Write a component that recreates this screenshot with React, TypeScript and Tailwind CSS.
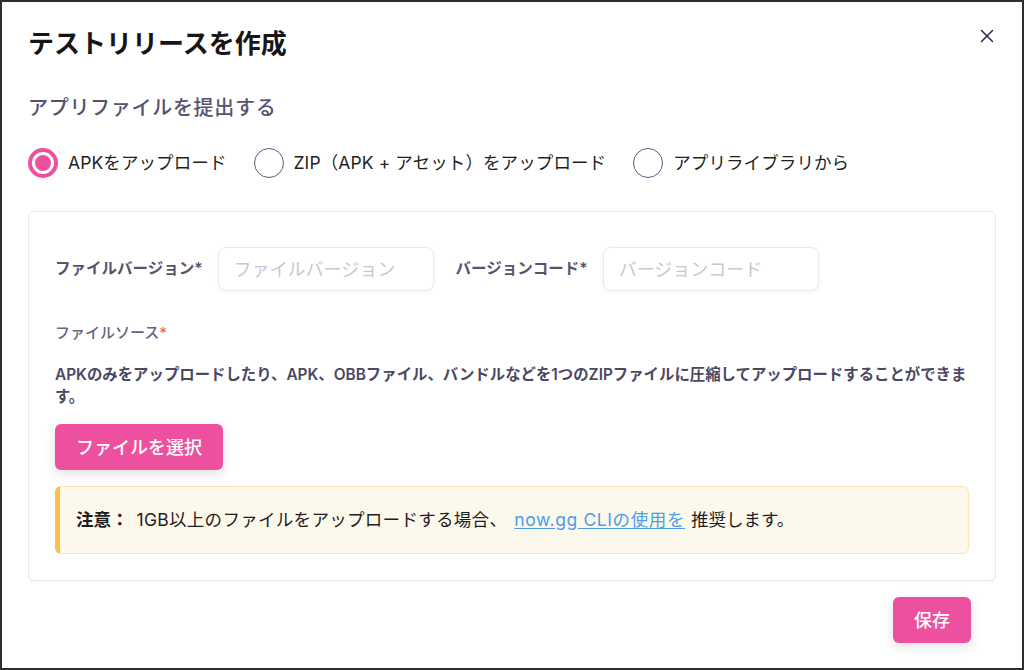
import { X } from 'lucide-react'

const font = { fontFamily: '"Inter", "Noto Sans CJK JP", sans-serif' }

const options = [
  { label: 'APKをアップロード', checked: true },
  { label: 'ZIP（APK + アセット）をアップロード', checked: false },
  { label: 'アプリライブラリから', checked: false }
]

function Radio({ checked }: { checked: boolean }) {
  if (checked) {
    return (
      <span className="flex h-[30px] w-[30px] shrink-0 items-center justify-center rounded-full bg-[#ec509f]">
        <span className="h-[22px] w-[22px] rounded-full border-[3px] border-white bg-[#ec509f]" />
      </span>
    )
  }
  return <span className="h-[30px] w-[30px] shrink-0 rounded-full border-[1.5px] border-[#5d5a80]" />
}

function Field({ label, placeholder }: { label: string; placeholder: string }) {
  return (
    <div className="flex items-center gap-[15px]">
      <span className="text-[15.5px] font-semibold text-[#57536f]">{label}*</span>
      <input
        placeholder={placeholder}
        className="h-[44px] w-[216px] rounded-lg border border-[#e9e9ef] bg-white px-[15px] text-[18px] text-[#333] shadow-[0_1px_4px_rgba(0,0,0,0.05)] outline-none placeholder:text-[#c9c7d4]"
      />
    </div>
  )
}

export default function App() {
  return (
    <div style={font} className="box-border h-[670px] w-[1024px] border-2 border-[#2e2e2e] bg-white px-[26px] pt-[26px]">
      {/* en-tête */}
      <div className="flex items-start justify-between">
        <h1 className="text-[26px] font-semibold leading-[32px] text-[#161616]">テストリリースを作成</h1>
        <button className="-mt-[3px] -mr-[2px] text-[#2a2845]">
          <X size={22} strokeWidth={1.6} />
        </button>
      </div>

      <h2 className="mt-[34px] text-[20px] font-medium leading-[28px] tracking-[0.7px] text-[#57536f]">
        アプリファイルを提出する
      </h2>

      {/* choix du type */}
      <div className="mt-[26px] flex items-center gap-[27px]">
        {options.map((opt, i) => (
          <label key={i} className="flex items-center gap-[10px]">
            <Radio checked={opt.checked} />
            <span className="text-[17.5px] leading-[24px] tracking-[0.1px] text-[#1f1f1f]">{opt.label}</span>
          </label>
        ))}
      </div>

      {/* carte */}
      <div className="mt-[33px] rounded-md border border-[#e8e8ee] bg-white px-[26px] pt-[35px] pb-[26px] shadow-[0_1px_3px_rgba(0,0,0,0.04)]">
        <div className="flex items-center gap-[22px]">
          <Field label="ファイルバージョン" placeholder="ファイルバージョン" />
          <Field label="バージョンコード" placeholder="バージョンコード" />
        </div>

        <div className="mt-[31px] text-[15px] font-medium leading-[22px] text-[#67637c]">
          ファイルソース<span className="text-[#f06a5a]">*</span>
        </div>

        <p className="mt-[20px] text-[15.4px] font-semibold leading-[22px] text-[#4b4862]">
          <span className="whitespace-nowrap">
            APKのみをアップロードしたり、APK、OBBファイル、バンドルなどを1つのZIPファイルに圧縮してアップロードすることができま
          </span>
          <br />
          す。
        </p>

        <button className="mt-[16px] h-[46px] rounded-md bg-[#ec509f] px-[21px] text-[18px] font-medium text-white shadow-[0_4px_12px_rgba(0,0,0,0.12)]">
          ファイルを選択
        </button>

        <div className="mt-[16px] flex h-[68px] items-center rounded-md border border-l-[5px] border-[#fbe6b3] border-l-[#f6c24c] bg-[#fdf8ec] pl-[16px] text-[17.5px] text-[#1d1d1d]">
          <span className="font-semibold">注意：</span>
          <span className="ml-[8px] tracking-[0.3px]">1GB以上のファイルをアップロードする場合、</span>
          <a href="#" className="ml-[7px] tracking-[0.6px] text-[#4a9ee8] underline underline-offset-2">
            now.gg CLIの使用を
          </a>
          <span className="ml-[6px]">推奨します。</span>
        </div>
      </div>

      {/* pied */}
      <div className="mt-[16px] flex justify-end pr-[25px]">
        <button className="h-[46px] w-[78px] rounded-md bg-[#ec509f] text-[18px] font-medium text-white shadow-[0_4px_12px_rgba(0,0,0,0.12)]">
          保存
        </button>
      </div>
    </div>
  )
}
